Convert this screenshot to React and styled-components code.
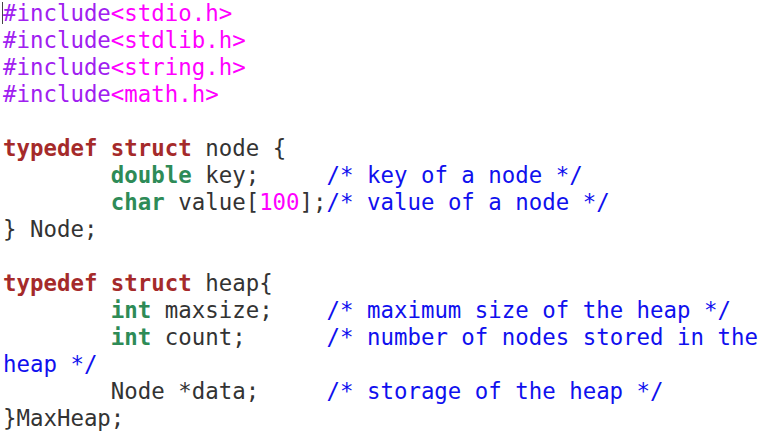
import React from "react";
import styled, { createGlobalStyle } from "styled-components";

const Global = createGlobalStyle`
  html, body { margin: 0; padding: 0; background: #ffffff; }
`;

const Editor = styled.div`
  position: relative;
  width: 777px;
  height: 448px;
  overflow: hidden;
  background: #ffffff;
  padding: 0 0 0 3px;
  box-sizing: border-box;
  font-family: "DejaVu Sans Mono", "Liberation Mono", monospace;
  font-size: 22.4px;
  color: #333333;
`;

const Line = styled.div`
  height: 27px;
  line-height: 27px;
  white-space: pre;
`;

const colors = {
  pre: "#a020f0",
  inc: "#ff00ff",
  kw: "#a52a2a",
  type: "#2e8b57",
  cm: "#1010ee",
  num: "#ff00ff",
  txt: "#333333",
};

const Tok = styled.span`
  color: ${(p) => colors[p.$k] || colors.txt};
  font-weight: ${(p) => (p.$k === "kw" || p.$k === "type" ? 700 : 400)};
`;

const Caret = styled.div`
  position: absolute;
  left: 2px;
  top: 2px;
  width: 1px;
  height: 22px;
  background: #444;
`;

const lines = [
  [["pre", "#include"], ["inc", "<stdio.h>"]],
  [["pre", "#include"], ["inc", "<stdlib.h>"]],
  [["pre", "#include"], ["inc", "<string.h>"]],
  [["pre", "#include"], ["inc", "<math.h>"]],
  [],
  [["kw", "typedef"], ["txt", " "], ["kw", "struct"], ["txt", " node {"]],
  [["txt", "        "], ["type", "double"], ["txt", " key;     "], ["cm", "/* key of a node */"]],
  [["txt", "        "], ["type", "char"], ["txt", " value["], ["num", "100"], ["txt", "];"], ["cm", "/* value of a node */"]],
  [["txt", "} Node;"]],
  [],
  [["kw", "typedef"], ["txt", " "], ["kw", "struct"], ["txt", " heap{"]],
  [["txt", "        "], ["type", "int"], ["txt", " maxsize;    "], ["cm", "/* maximum size of the heap */"]],
  [["txt", "        "], ["type", "int"], ["txt", " count;      "], ["cm", "/* number of nodes stored in the"]],
  [["cm", "heap */"]],
  [["txt", "        Node *data;     "], ["cm", "/* storage of the heap */"]],
  [["txt", "}MaxHeap;"]],
];

export default function App() {
  return (
    <>
      <Global />
      <Editor>
        <Caret />
        {lines.map((toks, i) => (
          <Line key={i}>
            {toks.length === 0 ? " " : toks.map(([k, t], j) => (
              <Tok key={j} $k={k}>{t}</Tok>
            ))}
          </Line>
        ))}
      </Editor>
    </>
  );
}
